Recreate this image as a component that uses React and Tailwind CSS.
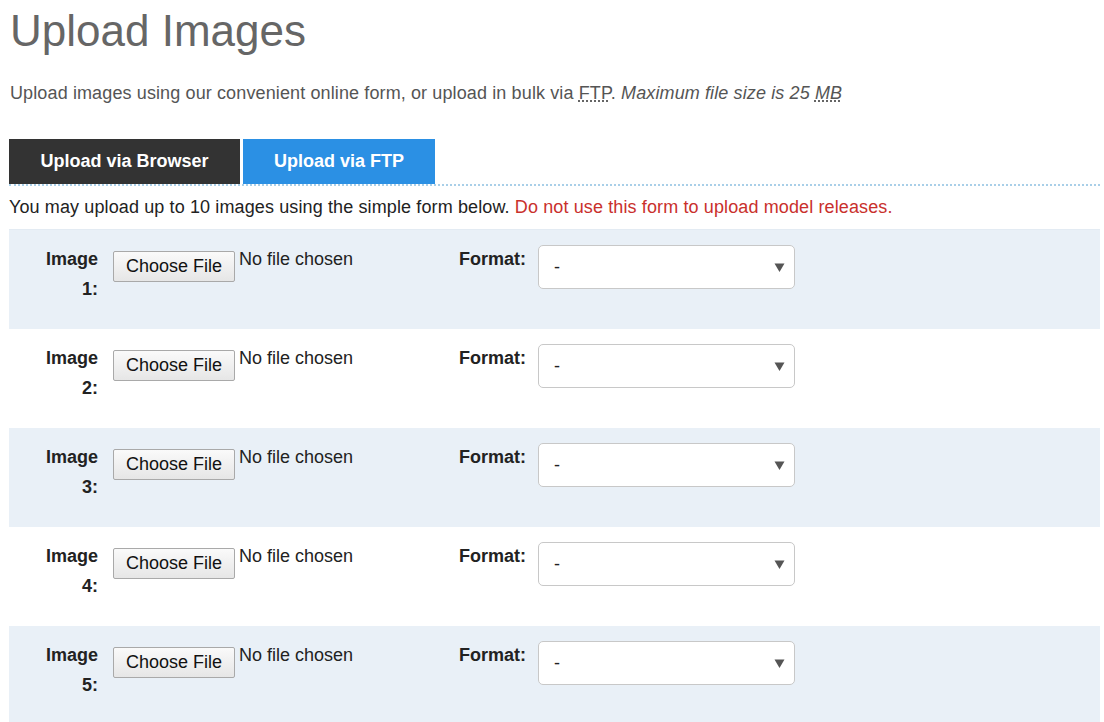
import { useState } from 'react';

const rows = [1, 2, 3, 4, 5];

function UploadRow({ n, shaded }) {
    return (
        <div className={`flex h-[99px] pt-[14px] ${shaded ? 'bg-[#e9f0f7]' : 'bg-white'}`}>
            <label className="w-[89px] shrink-0 pl-[30px] text-right font-bold leading-[30px] text-[#222]">
                Image {n}:
            </label>
            <div className="ml-[15px] flex w-[346px] shrink-0 items-start">
                <span className="mt-[7px] inline-block h-[31px] rounded-[2px] border border-[#a9a9a9] bg-gradient-to-b from-[#fafafa] to-[#e6e6e6] px-[12px] leading-[29px] text-[#111]">
                    Choose File
                </span>
                <span className="ml-[4px] leading-[30px] text-[#222]">No file chosen</span>
            </div>
            <label className="font-bold leading-[30px] text-[#222]">Format:</label>
            <div className="ml-[12px] mt-[1px] flex h-[44px] w-[257px] items-center justify-between rounded-[5px] border border-[#c8c8c8] bg-white pl-[15px] pr-[9px]">
                <span className="text-[#222]">-</span>
                <svg width="11" height="11" viewBox="0 0 11 11">
                    <path d="M0.5 1.5 L10.5 1.5 L5.5 10 Z" fill="#555" />
                </svg>
            </div>
        </div>
    );
}

export default function App() {
    const [tab] = useState('browser');

    return (
        <div className="min-h-screen bg-white pl-[9px] pr-[4px] text-[18px] font-['Liberation_Sans',Arial,sans-serif]">
            <h1 className="pl-[1px] pt-[7px] text-[44px] font-normal leading-[48px] text-[#666]">
                Upload Images
            </h1>

            <p className="mt-[25px] pl-[1px] leading-[26px] tracking-[0.12px] text-[#555]">
                Upload images using our convenient online form, or upload in bulk via{' '}
                <abbr className="underline decoration-dotted underline-offset-2" title="File Transfer Protocol">FTP</abbr>.{' '}
                <em>
                    Maximum file size is 25{' '}
                    <abbr className="underline decoration-dotted underline-offset-2" title="Megabytes">MB</abbr>
                </em>
            </p>

            {/* Tabs */}
            <div className="mt-[33px] flex gap-[3px] border-b-2 border-dotted border-[#a9cfe8]">
                <button
                    className={`h-[45px] w-[231px] font-bold text-white ${tab === 'browser' ? 'bg-[#333]' : 'bg-[#2b90e4]'}`}
                >
                    Upload via Browser
                </button>
                <button className="h-[45px] w-[192px] bg-[#2b90e4] font-bold text-white">
                    Upload via FTP
                </button>
            </div>

            <p className="mt-[8px] leading-[26px] tracking-[0.12px] text-[#222]">
                You may upload up to 10 images using the simple form below.{' '}
                <span className="text-[#c9302c]">Do not use this form to upload model releases.</span>
            </p>

            <div className="mt-[9px] border-t border-[#e3ebf3]">
                {rows.map((n) => (
                    <UploadRow key={n} n={n} shaded={n % 2 === 1} />
                ))}
            </div>
        </div>
    );
}
